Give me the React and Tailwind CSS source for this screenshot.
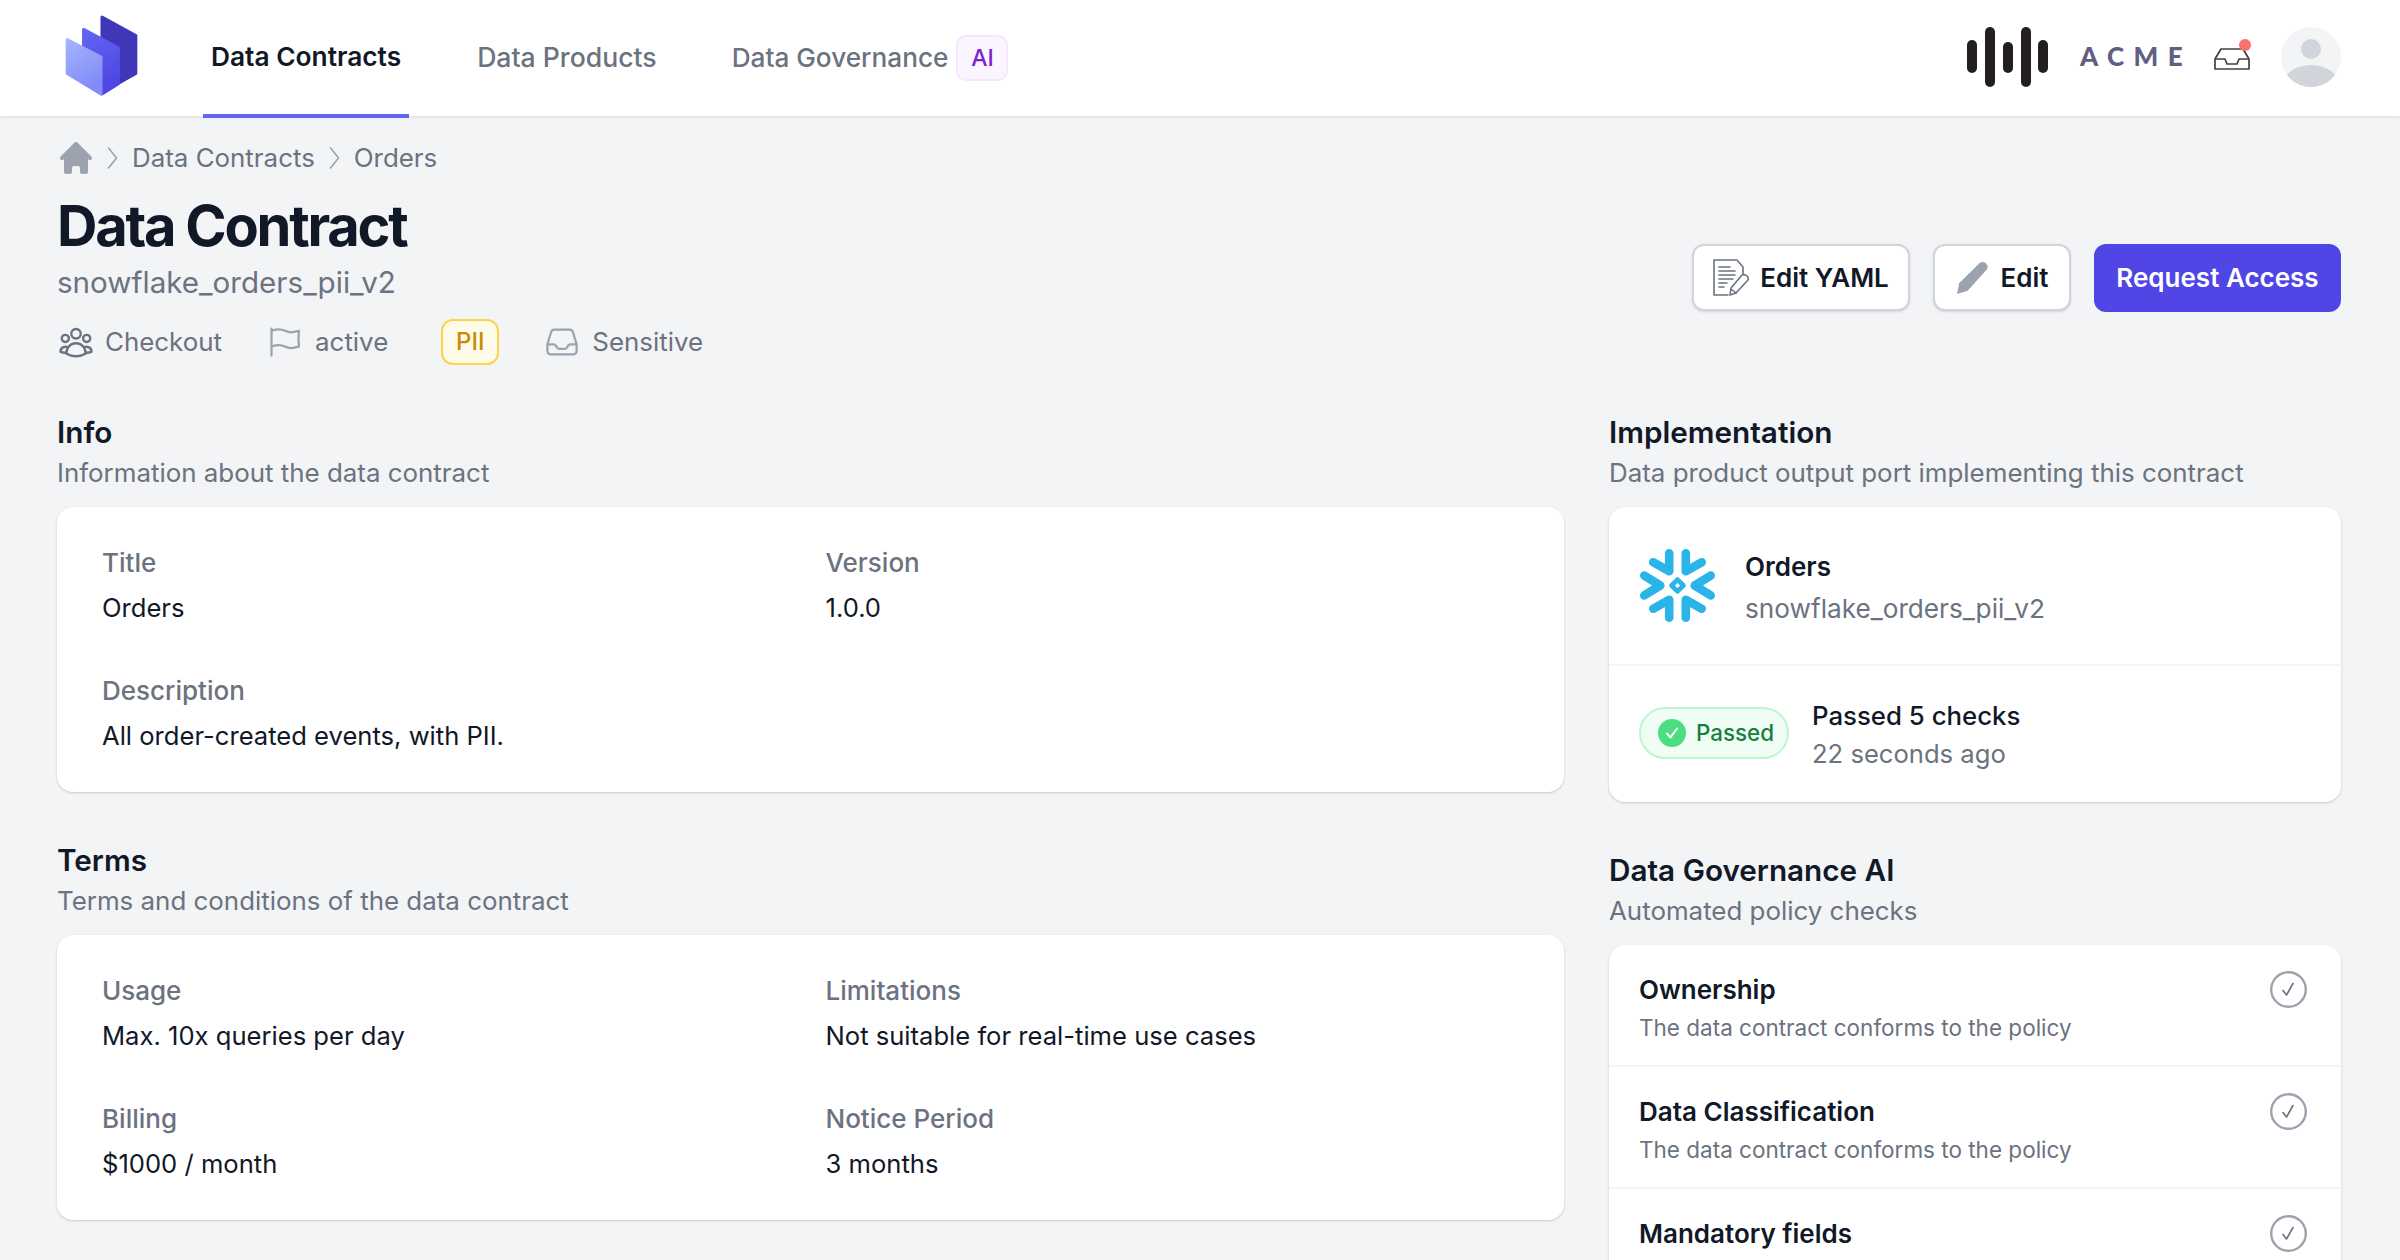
import React from 'react';
import { HiHome } from 'react-icons/hi';
import { HiOutlineUserGroup, HiOutlineFlag, HiOutlineInbox } from 'react-icons/hi2';

const Logo = () => (
  <svg viewBox="-2 -2 75 84" className="w-[77px] h-[86px]">
    <defs>
      <linearGradient id="front" x1="0" y1="0" x2="0.4" y2="1">
        <stop offset="0" stopColor="#a5b4fc" />
        <stop offset="1" stopColor="#818cf8" />
      </linearGradient>
      <linearGradient id="mid" x1="0" y1="0" x2="0.3" y2="1">
        <stop offset="0" stopColor="#6366f1" />
        <stop offset="1" stopColor="#4f46e5" />
      </linearGradient>
    </defs>
    <path d="M36 3 L69 21 V58 L53 67 V31 L36 22 Z" fill="#3f37b8" stroke="#3f37b8" strokeWidth="3" strokeLinejoin="round" />
    <path d="M18 15 L52 33 V68 L36 78 V41 L18 31 Z" fill="url(#mid)" stroke="url(#mid)" strokeWidth="3" strokeLinejoin="round" />
    <path d="M2 25 L35 42 V78 L2 58 Z" fill="url(#front)" stroke="url(#front)" strokeWidth="3" strokeLinejoin="round" />
  </svg>
);

const Bars = () => (
  <svg viewBox="0 0 81 60" className="w-[81px] h-[60px]" fill="#231f20">
    <rect x="0" y="13" width="10" height="33" rx="5" />
    <rect x="18" y="0" width="10" height="60" rx="5" />
    <rect x="36" y="15" width="10" height="31" rx="5" />
    <rect x="54" y="0" width="10" height="60" rx="5" />
    <rect x="71" y="13" width="10" height="33" rx="5" />
  </svg>
);

const TrayIcon = () => (
  <div className="relative w-[36px] h-[22px] mt-[5px]">
    <svg viewBox="0 0 36 22" className="w-[36px] h-[22px]" fill="none" stroke="#3f3f46" strokeWidth="1.7" strokeLinejoin="round">
      <path d="M1 11 L7 1 H29 L35 11 V21 H1 Z" />
      <path d="M1 11 H11 L13 16 H23 L25 11 H35" />
    </svg>
    <span className="absolute top-[-9px] right-[-1px] w-[12px] h-[12px] rounded-full bg-[#f87171]"></span>
  </div>
);

const Avatar = () => (
  <svg viewBox="0 0 60 60" className="w-[60px] h-[60px] rounded-full">
    <rect width="60" height="60" fill="#f3f4f6" />
    <circle cx="30" cy="22" r="10" fill="#d1d5db" />
    <ellipse cx="30" cy="62" rx="30" ry="24" fill="#d1d5db" />
  </svg>
);

const Snowflake = () => (
  <svg viewBox="55 55 230 220" className="w-[77px] h-[73px] shrink-0" fill="none" stroke="#29b5e8" strokeWidth="26" strokeLinecap="round" strokeLinejoin="round">
    <path d="M145 68 V122 L97 95" />
    <path d="M195 68 V122 L243 95" />
    <path d="M145 262 V208 L97 235" />
    <path d="M195 262 V208 L243 235" />
    <path d="M70 135 L118 165 L70 195" />
    <path d="M270 135 L222 165 L270 195" />
    <path d="M170 147 L188 165 L170 183 L152 165 Z" strokeWidth="14" />
  </svg>
);

const Chevron = () => (
  <svg viewBox="0 0 11 24" className="w-[11px] h-[24px]" fill="none" stroke="#9ca3af" strokeWidth="1.6" strokeLinecap="round" strokeLinejoin="round">
    <path d="M1.5 2 L9.5 12 L1.5 22" />
  </svg>
);

const CheckCircle = () => (
  <svg viewBox="0 0 37 37" className="w-[37px] h-[37px] shrink-0" fill="none" stroke="#9ca3af" strokeWidth="2.4">
    <circle cx="18.5" cy="18.5" r="17.3" />
    <path d="M13 19.5 L16.5 24 L23 12.5" strokeWidth="1.6" stroke="#6b7280" strokeLinejoin="round" strokeLinecap="round" />
  </svg>
);

const DocPen = () => (
  <svg viewBox="0 0 36 37" className="w-[36px] h-[37px]" fill="none" stroke="#6b7280" strokeWidth="1.6" strokeLinecap="round" strokeLinejoin="round">
    <path d="M15 36 H1 V1 H24 L30 8 V15" />
    <path d="M6 8 H17 M6 12 H22 M6 16 H22 M6 20 H20 M6 24 H14 M6 28 H11" />
    <path d="M17 36 L18 29 L29 16 Q32 15 34 17 Q36 19 35 21 L23 34 Z" />
    <path d="M18 30 L23 34" />
  </svg>
);

const PencilFill = () => (
  <svg viewBox="0 0 32 32" className="w-[34px] h-[34px]" fill="#9ca3af">
    <path d="M1 31 L3 21 L22 2 Q25 0 28 2 Q31 5 29 8 L11 28 Z" />
  </svg>
);

const Field = ({ label, value }) => (
  <div>
    <div className="text-[26px] leading-[36px] font-medium text-[#6b7280]">{label}</div>
    <div className="text-[25.6px] leading-[36px] mt-[9px] text-[#111827]">{value}</div>
  </div>
);

const Section = ({ title, sub, children, className }) => (
  <section className={className}>
    <h3 className="text-[29.7px] leading-[40px] font-semibold text-[#111827]">{title}</h3>
    <p className="text-[25.9px] leading-[36px] mt-[3px] text-[#6b7280]">{sub}</p>
    {children}
  </section>
);

const InfoCard = ({ rows }) => (
  <div className="mt-[16px] bg-white rounded-[16px] shadow-[0_1px_3px_rgba(0,0,0,0.12),0_1px_2px_rgba(0,0,0,0.06)] h-[285px] px-[45px] pt-[38px]">
    <div className="grid grid-cols-2 gap-x-[30px] gap-y-[47px]">
      {rows.map((r) => (
        <Field key={r[0]} label={r[0]} value={r[1]} />
      ))}
    </div>
  </div>
);

const Policy = ({ title, last }) => (
  <div className={`h-[122px] px-[30px] pt-[26px] flex justify-between items-start ${last ? '' : 'border-b-2 border-[#f3f4f6]'}`}>
    <div>
      <div className="text-[26px] leading-[38px] font-semibold text-[#111827]">{title}</div>
      {!last && <div className="text-[22.5px] leading-[32px] mt-[3px] text-[#6b7280]">The data contract conforms to the policy</div>}
    </div>
    <div className="pr-[4px]">
      <CheckCircle />
    </div>
  </div>
);

export default function App() {
  return (
    <div className="h-[1260px] overflow-hidden bg-[#f3f4f6] font-['Inter',sans-serif]">
      <nav className="h-[116px] bg-white shadow-[0_1px_3px_rgba(0,0,0,0.1)] px-[59px] flex items-center justify-between relative">
        <div className="flex items-stretch h-full">
          <div className="flex items-center ml-[4px] mb-[6px] mr-[63px]">
            <Logo />
          </div>
          <a className="px-[8px] flex items-center text-[26.3px] font-semibold text-[#111827] border-b-4 border-[#6366f1] h-[118px]">Data Contracts</a>
          <a className="ml-[60px] px-[8px] flex items-center text-[26.6px] font-medium text-[#6b7280]">Data Products</a>
          <a className="ml-[59px] px-[8px] flex items-center gap-[8px] text-[26.2px] font-medium text-[#6b7280]">
            Data Governance
            <span className="w-[52px] h-[46px] flex items-center justify-center rounded-[10px] border-2 border-[#f3e8ff] bg-[#faf5ff] text-[23px] font-medium text-[#7e22ce]">AI</span>
          </a>
        </div>
        <div className="flex items-center mb-[3px]">
          <Bars />
          <span className="ml-[32px] mr-[22px] text-[26px] font-black tracking-[0.36em] text-[#615e83] font-['Lato',sans-serif]">ACME</span>
          <TrayIcon />
          <div className="ml-[31px]">
            <Avatar />
          </div>
        </div>
      </nav>

      <main className="pl-[57px] pr-[59px]">
        <div className="pt-[22px] flex items-center text-[25.9px] leading-[36px] text-[#6b7280]">
          <HiHome className="w-[40px] h-[40px] -ml-[1px] text-[#9ca3af]" />
          <span className="ml-[11px] mr-[14px]"><Chevron /></span>
          <span>Data Contracts</span>
          <span className="mx-[14px]"><Chevron /></span>
          <span>Orders</span>
        </div>

        <div className="flex justify-between items-center">
          <div>
            <h1 className="mt-[13px] text-[56px] leading-[70px] font-bold tracking-[-0.04em] text-[#111827]">Data Contract</h1>
            <div className="mt-[1px] text-[29.6px] leading-[40px] text-[#6b7280]">snowflake_orders_pii_v2</div>
            <div className="mt-[17px] flex items-center text-[25.9px] leading-[36px] text-[#6b7280]">
              <HiOutlineUserGroup className="w-[38px] h-[38px] text-[#6b7280]" />
              <span className="ml-[10px]">Checkout</span>
              <HiOutlineFlag className="ml-[45px] w-[36px] h-[36px] text-[#9ca3af]" />
              <span className="ml-[12px]">active</span>
              <span className="ml-[53px] w-[58px] h-[46px] flex items-center justify-center rounded-[12px] border-2 border-[#fcd34d] bg-[#fefce8] text-[24px] font-medium text-[#ca8a04]">PII</span>
              <HiOutlineInbox className="ml-[45px] w-[36px] h-[36px] text-[#9ca3af]" />
              <span className="ml-[12px]">Sensitive</span>
            </div>
          </div>
          <div className="flex items-center gap-[23px] mt-[12px]">
            <button className="h-[67px] w-[218px] flex items-center justify-center gap-[11px] bg-white rounded-[12px] border-2 border-[#d1d5db] shadow-sm text-[26px] font-semibold text-[#111827]">
              <DocPen />
              Edit YAML
            </button>
            <button className="h-[67px] w-[138px] flex items-center justify-center gap-[11px] bg-white rounded-[12px] border-2 border-[#d1d5db] shadow-sm text-[26px] font-semibold text-[#111827]">
              <PencilFill />
              Edit
            </button>
            <button className="h-[68px] w-[247px] flex items-center justify-center bg-[#4f46e5] rounded-[12px] text-[26px] font-semibold text-white">
              Request Access
            </button>
          </div>
        </div>

        <div className="mt-[47px] flex gap-[45px]">
          <div className="w-[1507px] shrink-0">
            <Section title="Info" sub="Information about the data contract">
              <InfoCard rows={[['Title', 'Orders'], ['Version', '1.0.0'], ['Description', 'All order-created events, with PII.']]} />
            </Section>
            <Section title="Terms" sub="Terms and conditions of the data contract" className="mt-[48px]">
              <InfoCard rows={[['Usage', 'Max. 10x queries per day'], ['Limitations', 'Not suitable for real-time use cases'], ['Billing', '$1000 / month'], ['Notice Period', '3 months']]} />
            </Section>
          </div>

          <div className="flex-1">
            <Section title="Implementation" sub="Data product output port implementing this contract">
              <div className="mt-[16px] bg-white rounded-[16px] shadow-[0_1px_3px_rgba(0,0,0,0.12),0_1px_2px_rgba(0,0,0,0.06)] h-[295px]">
                <div className="h-[159px] px-[30px] flex items-center border-b-2 border-[#f3f4f6]">
                  <Snowflake />
                  <div className="ml-[29px] mt-[4px]">
                    <div className="text-[26px] leading-[38px] font-semibold text-[#111827]">Orders</div>
                    <div className="text-[26.2px] leading-[36px] mt-[5px] text-[#6b7280]">snowflake_orders_pii_v2</div>
                  </div>
                </div>
                <div className="h-[134px] px-[30px] flex items-center">
                  <span className="w-[150px] h-[52px] flex items-center gap-[10px] pl-[17px] rounded-full border-2 border-[#bbf7d0] bg-[#f0fdf4] text-[22.4px] font-medium text-[#15803d]">
                    <span className="w-[28px] h-[28px] rounded-full bg-[#4ade80] flex items-center justify-center">
                      <svg viewBox="0 0 16 16" className="w-[16px] h-[16px]" fill="none" stroke="white" strokeWidth="2" strokeLinecap="round" strokeLinejoin="round">
                        <path d="M3 8.5 L6.5 12.5 L13 3.5" />
                      </svg>
                    </span>
                    Passed
                  </span>
                  <div className="ml-[23px] mt-[3px]">
                    <div className="text-[25.8px] leading-[38px] font-medium text-[#111827]">Passed 5 checks</div>
                    <div className="text-[25.6px] leading-[38px] text-[#6b7280]">22 seconds ago</div>
                  </div>
                </div>
              </div>
            </Section>
            <Section title="Data Governance AI" sub="Automated policy checks" className="mt-[48px]">
              <div className="mt-[16px] bg-white rounded-[16px] shadow-[0_1px_3px_rgba(0,0,0,0.12),0_1px_2px_rgba(0,0,0,0.06)]">
                <Policy title="Ownership" />
                <Policy title="Data Classification" />
                <Policy title="Mandatory fields" last />
              </div>
            </Section>
          </div>
        </div>
      </main>
    </div>
  );
}
